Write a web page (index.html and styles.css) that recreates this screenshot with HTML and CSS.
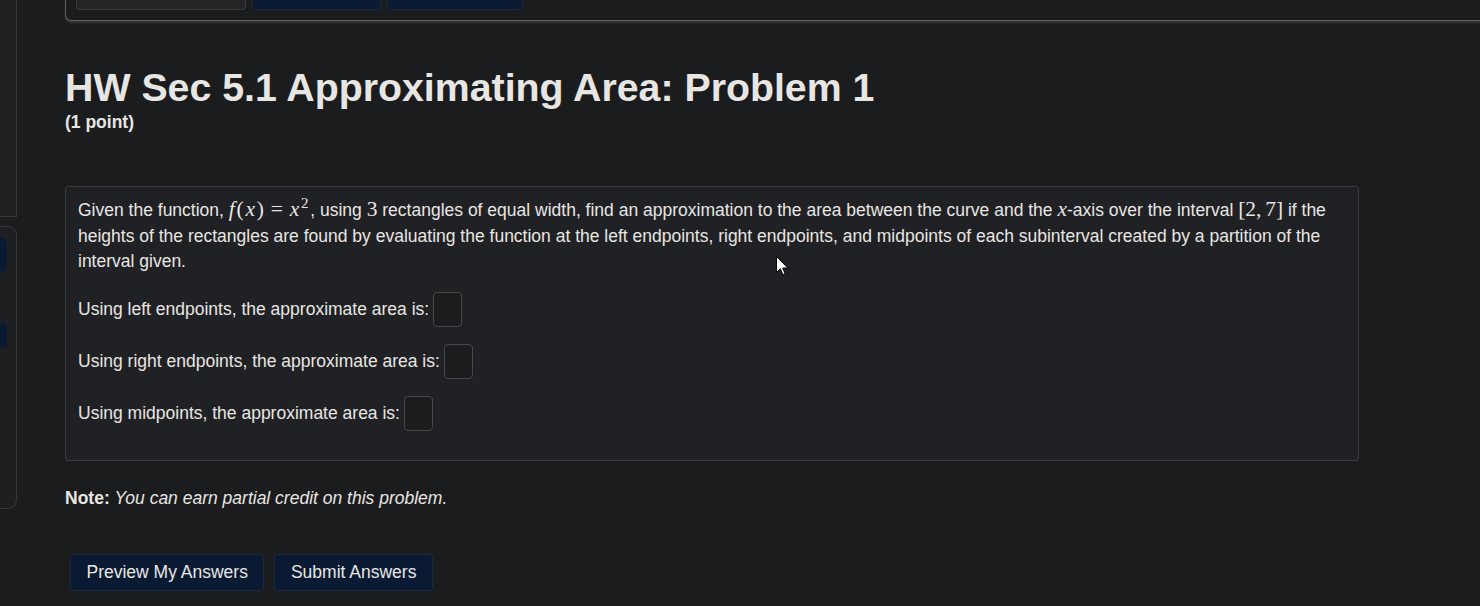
FILE: index.html
```html
<!DOCTYPE html>
<html lang="en">
<head>
<meta charset="utf-8">
<title>HW Sec 5.1 Approximating Area: Problem 1</title>
<link rel="stylesheet" href="styles.css">
</head>
<body>
<div class="page">
  <aside class="sidebar">
    <div class="side-top"></div>
    <div class="side-panel">
      <div class="side-blue side-blue-a"></div>
      <div class="side-blue side-blue-b"></div>
    </div>
  </aside>
  <main class="main">
    <div class="topbar">
      <span class="tb-btn tb-grey"></span>
      <span class="tb-btn tb-navy tb-w1"></span>
      <span class="tb-btn tb-navy tb-w2"></span>
    </div>
    <h2 class="title">HW Sec 5.1 Approximating Area: Problem 1</h2>
    <div class="points">(1 point)</div>
    <div class="problem">
      <p class="intro">Given the function, <span class="math spaced"><i>f</i><span class="up">(</span><i>x</i><span class="up">)</span><span class="eq">=</span><i>x</i><sup>2</sup></span>, using <span class="math"><span class="up">3</span></span> rectangles of equal width, find an approximation to the area between the curve and the <span class="math"><i>x</i></span>-axis over the interval <span class="math"><span class="up">[2,</span><span class="up thin">7]</span></span> if the heights of the rectangles are found by evaluating the function at the left endpoints, right endpoints, and midpoints of each subinterval created by a partition of the interval given.</p>
      <div class="answer">Using left endpoints, the approximate area is: <input class="ans-input" type="text" aria-label="left"></div>
      <div class="answer">Using right endpoints, the approximate area is: <input class="ans-input" type="text" aria-label="right"></div>
      <div class="answer">Using midpoints, the approximate area is: <input class="ans-input" type="text" aria-label="mid"></div>
    </div>
    <p class="note"><b>Note:</b> <i>You can earn partial credit on this problem.</i></p>
    <div class="actions">
      <button class="btn" type="button">Preview My Answers</button>
      <button class="btn" type="button">Submit Answers</button>
    </div>
  </main>
</div>
<svg class="cursor" width="13" height="20" viewBox="0 0 13 20" aria-hidden="true">
  <path d="M0.5 0.5 L0.5 16.5 L4.3 12.8 L6.9 18.8 L9.2 17.8 L6.7 12 L11.8 12 Z" fill="#ffffff" stroke="#000000" stroke-width="1" stroke-linejoin="miter"/>
</svg>
</body>
</html>
```

FILE: styles.css
```css
html, body {
  margin: 0;
  padding: 0;
  background: #1b1c1e;
  color: #e8e6e3;
  font-family: "Liberation Sans", Arial, sans-serif;
  font-size: 17.5px;
  overflow: hidden;
}

.page {
  display: flex;
  min-height: 606px;
}

.sidebar {
  width: 17px;
  flex: none;
}

.side-top {
  height: 216px;
  background: #1f2123;
  border-right: 1px solid #36393c;
  border-bottom: 1px solid #36393c;
}

.side-panel {
  margin-top: 9px;
  height: 283px;
  background: #1d1f21;
  border: 1px solid #36393c;
  border-left: none;
  border-radius: 0 9px 9px 0;
  padding-top: 10px;
  box-sizing: border-box;
}

.side-blue {
  width: 7px;
  background: #0b1a33;
}

.side-blue-a {
  height: 35px;
  border-radius: 0 6px 6px 0;
}

.side-blue-b {
  margin-top: 51px;
  height: 24px;
}

.main {
  flex: 1;
  padding-left: 48px;
  min-width: 0;
}

.topbar {
  display: flex;
  gap: 6px;
  padding: 0 0 10px 10px;
  border: 1px solid #5a5f63;
  border-top: none;
  border-right: none;
  border-radius: 0 0 0 6px;
  box-shadow: 0 2px 2px rgba(70, 75, 80, 0.6);
}

.tb-btn {
  display: block;
  height: 9px;
  border: 1px solid #1b2940;
  border-top: none;
  border-radius: 0 0 4px 4px;
}

.tb-grey {
  width: 168px;
  background: #222426;
  border-color: #383b3e;
}

.tb-navy {
  background: #0b1a33;
}

.tb-w1 {
  width: 127px;
}

.tb-w2 {
  width: 134px;
}

.title {
  margin: 44px 0 0;
  font-size: 39.3px;
  line-height: 45px;
  font-weight: bold;
  color: #e8e6e3;
}

.points {
  margin-top: 2px;
  font-size: 17.5px;
  line-height: 21px;
  font-weight: bold;
}

.problem {
  margin-top: 53px;
  width: 1294px;
  box-sizing: border-box;
  background: #202124;
  border: 1px solid #393c3f;
  border-radius: 3px;
  padding: 11px 12px 29.5px 12px;
}

.intro {
  margin: 0;
  line-height: 25.5px;
}

.math {
  font-family: "Liberation Serif", "DejaVu Serif", serif;
  font-size: 21.5px;
  line-height: 1;
  white-space: nowrap;
}

.math.spaced {
  letter-spacing: 0.08em;
}

.math i {
  font-style: italic;
}

.math .up {
  font-style: normal;
}

.math .thin {
  margin-left: 0.17em;
}

.math .eq {
  margin: 0 0.24em;
}

.math sup {
  font-size: 0.7em;
  line-height: 0;
  vertical-align: 0.55em;
}

.answer {
  display: flex;
  align-items: center;
  gap: 4px;
  margin-top: 18px;
  height: 34px;
  line-height: 25px;
}

.ans-input {
  width: 29px;
  height: 35px;
  box-sizing: border-box;
  margin: 0;
  padding: 0;
  background: #1b1c1e;
  border: 1px solid #44484c;
  border-radius: 4px;
  color: #e8e6e3;
}

.note {
  margin: 25px 0 0;
  line-height: 25px;
}

.actions {
  display: flex;
  gap: 10px;
  margin: 43px 0 0 5px;
}

.btn {
  height: 37px;
  padding: 0 15.5px;
  background: #0b1a33;
  color: #e8e6e3;
  border: 1px solid #1b2940;
  border-radius: 4px;
  font-family: "Liberation Sans", Arial, sans-serif;
  font-size: 17.5px;
}

.cursor {
  position: absolute;
  left: 776px;
  top: 256px;
}
```
